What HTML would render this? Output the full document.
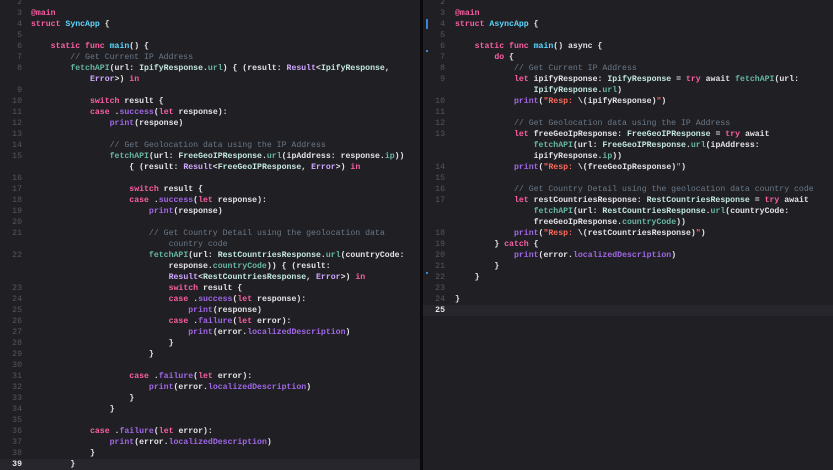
<!DOCTYPE html>
<html><head><meta charset="utf-8"><style>
html,body{margin:0;padding:0;width:833px;height:470px;overflow:hidden;background:#1f1f24}
.pane{position:absolute;top:0;height:470px;background:#1f1f24;overflow:hidden}
.row{position:absolute;left:0;right:0;height:11px;line-height:11px;font-family:"Liberation Mono",monospace;font-size:8.2px;color:#e4e4e6;white-space:pre;font-weight:bold}
.n{position:absolute;text-align:right;width:20px;color:#55555c;font-weight:normal}
.tx{position:absolute}
.hl{background:#26262c}
.hl .n{color:#e6e6e6;font-weight:bold}
.k{color:#fc5fa3;font-weight:bold}
.c{color:#6c7986;font-weight:normal}
.t{color:#c4e8df}
.f{color:#67b7a4}
.p{color:#a167e6}
.r{color:#d0a8ff}
.s{color:#fc6a5d}
.y{color:#5dd8ff}
</style></head><body>
<div class="pane" style="left:0;width:420px">
<div class="row" style="top:-3px"><span class="n" style="left:2px">2</span></div>
<div class="row" style="top:8px"><span class="n" style="left:2px">3</span><span class="tx" style="left:31px"><span class="k">@main</span></span></div>
<div class="row" style="top:19px"><span class="n" style="left:2px">4</span><span class="tx" style="left:31px"><span class="k">struct</span> <span class="y">SyncApp</span> {</span></div>
<div class="row" style="top:30px"><span class="n" style="left:2px">5</span></div>
<div class="row" style="top:41px"><span class="n" style="left:2px">6</span><span class="tx" style="left:31px">    <span class="k">static func</span> <span class="y">main</span>() {</span></div>
<div class="row" style="top:52px"><span class="n" style="left:2px">7</span><span class="tx" style="left:31px"><span class="c">        // Get Current IP Address</span></span></div>
<div class="row" style="top:63px"><span class="n" style="left:2px">8</span><span class="tx" style="left:31px">        <span class="f">fetchAPI</span>(url: <span class="t">IpifyResponse</span>.<span class="f">url</span>) { (result: <span class="r">Result</span>&lt;<span class="t">IpifyResponse</span>,</span></div>
<div class="row" style="top:74px"><span class="tx" style="left:31px">            <span class="r">Error</span>&gt;) <span class="k">in</span></span></div>
<div class="row" style="top:85px"><span class="n" style="left:2px">9</span></div>
<div class="row" style="top:96px"><span class="n" style="left:2px">10</span><span class="tx" style="left:31px">            <span class="k">switch</span> result {</span></div>
<div class="row" style="top:107px"><span class="n" style="left:2px">11</span><span class="tx" style="left:31px">            <span class="k">case</span> .<span class="p">success</span>(<span class="k">let</span> response):</span></div>
<div class="row" style="top:118px"><span class="n" style="left:2px">12</span><span class="tx" style="left:31px">                <span class="p">print</span>(response)</span></div>
<div class="row" style="top:129px"><span class="n" style="left:2px">13</span></div>
<div class="row" style="top:140px"><span class="n" style="left:2px">14</span><span class="tx" style="left:31px"><span class="c">                // Get Geolocation data using the IP Address</span></span></div>
<div class="row" style="top:151px"><span class="n" style="left:2px">15</span><span class="tx" style="left:31px">                <span class="f">fetchAPI</span>(url: <span class="t">FreeGeoIPResponse</span>.<span class="f">url</span>(ipAddress: response.<span class="f">ip</span>))</span></div>
<div class="row" style="top:162px"><span class="tx" style="left:31px">                    { (result: <span class="r">Result</span>&lt;<span class="t">FreeGeoIPResponse</span>, <span class="r">Error</span>&gt;) <span class="k">in</span></span></div>
<div class="row" style="top:173px"><span class="n" style="left:2px">16</span></div>
<div class="row" style="top:184px"><span class="n" style="left:2px">17</span><span class="tx" style="left:31px">                    <span class="k">switch</span> result {</span></div>
<div class="row" style="top:195px"><span class="n" style="left:2px">18</span><span class="tx" style="left:31px">                    <span class="k">case</span> .<span class="p">success</span>(<span class="k">let</span> response):</span></div>
<div class="row" style="top:206px"><span class="n" style="left:2px">19</span><span class="tx" style="left:31px">                        <span class="p">print</span>(response)</span></div>
<div class="row" style="top:217px"><span class="n" style="left:2px">20</span></div>
<div class="row" style="top:228px"><span class="n" style="left:2px">21</span><span class="tx" style="left:31px"><span class="c">                        // Get Country Detail using the geolocation data</span></span></div>
<div class="row" style="top:239px"><span class="tx" style="left:31px"><span class="c">                            country code</span></span></div>
<div class="row" style="top:250px"><span class="n" style="left:2px">22</span><span class="tx" style="left:31px">                        <span class="f">fetchAPI</span>(url: <span class="t">RestCountriesResponse</span>.<span class="f">url</span>(countryCode:</span></div>
<div class="row" style="top:261px"><span class="tx" style="left:31px">                            response.<span class="f">countryCode</span>)) { (result:</span></div>
<div class="row" style="top:272px"><span class="tx" style="left:31px">                            <span class="r">Result</span>&lt;<span class="t">RestCountriesResponse</span>, <span class="r">Error</span>&gt;) <span class="k">in</span></span></div>
<div class="row" style="top:283px"><span class="n" style="left:2px">23</span><span class="tx" style="left:31px">                            <span class="k">switch</span> result {</span></div>
<div class="row" style="top:294px"><span class="n" style="left:2px">24</span><span class="tx" style="left:31px">                            <span class="k">case</span> .<span class="p">success</span>(<span class="k">let</span> response):</span></div>
<div class="row" style="top:305px"><span class="n" style="left:2px">25</span><span class="tx" style="left:31px">                                <span class="p">print</span>(response)</span></div>
<div class="row" style="top:316px"><span class="n" style="left:2px">26</span><span class="tx" style="left:31px">                            <span class="k">case</span> .<span class="p">failure</span>(<span class="k">let</span> error):</span></div>
<div class="row" style="top:327px"><span class="n" style="left:2px">27</span><span class="tx" style="left:31px">                                <span class="p">print</span>(error.<span class="p">localizedDescription</span>)</span></div>
<div class="row" style="top:338px"><span class="n" style="left:2px">28</span><span class="tx" style="left:31px">                            }</span></div>
<div class="row" style="top:349px"><span class="n" style="left:2px">29</span><span class="tx" style="left:31px">                        }</span></div>
<div class="row" style="top:360px"><span class="n" style="left:2px">30</span></div>
<div class="row" style="top:371px"><span class="n" style="left:2px">31</span><span class="tx" style="left:31px">                    <span class="k">case</span> .<span class="p">failure</span>(<span class="k">let</span> error):</span></div>
<div class="row" style="top:382px"><span class="n" style="left:2px">32</span><span class="tx" style="left:31px">                        <span class="p">print</span>(error.<span class="p">localizedDescription</span>)</span></div>
<div class="row" style="top:393px"><span class="n" style="left:2px">33</span><span class="tx" style="left:31px">                    }</span></div>
<div class="row" style="top:404px"><span class="n" style="left:2px">34</span><span class="tx" style="left:31px">                }</span></div>
<div class="row" style="top:415px"><span class="n" style="left:2px">35</span></div>
<div class="row" style="top:426px"><span class="n" style="left:2px">36</span><span class="tx" style="left:31px">            <span class="k">case</span> .<span class="p">failure</span>(<span class="k">let</span> error):</span></div>
<div class="row" style="top:437px"><span class="n" style="left:2px">37</span><span class="tx" style="left:31px">                <span class="p">print</span>(error.<span class="p">localizedDescription</span>)</span></div>
<div class="row" style="top:448px"><span class="n" style="left:2px">38</span><span class="tx" style="left:31px">            }</span></div>
<div class="row hl" style="top:459px"><span class="n" style="left:2px">39</span><span class="tx" style="left:31px">        }</span></div>
</div>
<div style="position:absolute;left:420px;top:0;width:3px;height:470px;background:#0a0a0c"></div>
<div class="pane" style="left:423px;width:410px">
<div style="position:absolute;left:3px;top:19px;width:2px;height:10px;background:#3b82d6"></div>
<div style="position:absolute;left:3px;top:50px;width:2px;height:2px;background:#3b82d6"></div>
<div style="position:absolute;left:3px;top:272px;width:2px;height:2px;background:#3b82d6"></div>
<div class="row" style="top:-3px"><span class="n" style="left:2px">2</span></div>
<div class="row" style="top:8px"><span class="n" style="left:2px">3</span><span class="tx" style="left:32px"><span class="k">@main</span></span></div>
<div class="row" style="top:19px"><span class="n" style="left:2px">4</span><span class="tx" style="left:32px"><span class="k">struct</span> <span class="y">AsyncApp</span> {</span></div>
<div class="row" style="top:30px"><span class="n" style="left:2px">5</span></div>
<div class="row" style="top:41px"><span class="n" style="left:2px">6</span><span class="tx" style="left:32px">    <span class="k">static func</span> <span class="y">main</span>() async {</span></div>
<div class="row" style="top:52px"><span class="n" style="left:2px">7</span><span class="tx" style="left:32px">        <span class="k">do</span> {</span></div>
<div class="row" style="top:63px"><span class="n" style="left:2px">8</span><span class="tx" style="left:32px"><span class="c">            // Get Current IP Address</span></span></div>
<div class="row" style="top:74px"><span class="n" style="left:2px">9</span><span class="tx" style="left:32px">            <span class="k">let</span> ipifyResponse: <span class="t">IpifyResponse</span> = <span class="k">try</span> await <span class="f">fetchAPI</span>(url:</span></div>
<div class="row" style="top:85px"><span class="tx" style="left:32px">                <span class="t">IpifyResponse</span>.<span class="f">url</span>)</span></div>
<div class="row" style="top:96px"><span class="n" style="left:2px">10</span><span class="tx" style="left:32px">            <span class="p">print</span>(<span class="s">"Resp: </span>\(ipifyResponse)<span class="s">"</span>)</span></div>
<div class="row" style="top:107px"><span class="n" style="left:2px">11</span></div>
<div class="row" style="top:118px"><span class="n" style="left:2px">12</span><span class="tx" style="left:32px"><span class="c">            // Get Geolocation data using the IP Address</span></span></div>
<div class="row" style="top:129px"><span class="n" style="left:2px">13</span><span class="tx" style="left:32px">            <span class="k">let</span> freeGeoIpResponse: <span class="t">FreeGeoIPResponse</span> = <span class="k">try</span> await</span></div>
<div class="row" style="top:140px"><span class="tx" style="left:32px">                <span class="f">fetchAPI</span>(url: <span class="t">FreeGeoIPResponse</span>.<span class="f">url</span>(ipAddress:</span></div>
<div class="row" style="top:151px"><span class="tx" style="left:32px">                ipifyResponse.<span class="f">ip</span>))</span></div>
<div class="row" style="top:162px"><span class="n" style="left:2px">14</span><span class="tx" style="left:32px">            <span class="p">print</span>(<span class="s">"Resp: </span>\(freeGeoIpResponse)<span class="s">"</span>)</span></div>
<div class="row" style="top:173px"><span class="n" style="left:2px">15</span></div>
<div class="row" style="top:184px"><span class="n" style="left:2px">16</span><span class="tx" style="left:32px"><span class="c">            // Get Country Detail using the geolocation data country code</span></span></div>
<div class="row" style="top:195px"><span class="n" style="left:2px">17</span><span class="tx" style="left:32px">            <span class="k">let</span> restCountriesResponse: <span class="t">RestCountriesResponse</span> = <span class="k">try</span> await</span></div>
<div class="row" style="top:206px"><span class="tx" style="left:32px">                <span class="f">fetchAPI</span>(url: <span class="t">RestCountriesResponse</span>.<span class="f">url</span>(countryCode:</span></div>
<div class="row" style="top:217px"><span class="tx" style="left:32px">                freeGeoIpResponse.<span class="f">countryCode</span>))</span></div>
<div class="row" style="top:228px"><span class="n" style="left:2px">18</span><span class="tx" style="left:32px">            <span class="p">print</span>(<span class="s">"Resp: </span>\(restCountriesResponse)<span class="s">"</span>)</span></div>
<div class="row" style="top:239px"><span class="n" style="left:2px">19</span><span class="tx" style="left:32px">        } <span class="k">catch</span> {</span></div>
<div class="row" style="top:250px"><span class="n" style="left:2px">20</span><span class="tx" style="left:32px">            <span class="p">print</span>(error.<span class="p">localizedDescription</span>)</span></div>
<div class="row" style="top:261px"><span class="n" style="left:2px">21</span><span class="tx" style="left:32px">        }</span></div>
<div class="row" style="top:272px"><span class="n" style="left:2px">22</span><span class="tx" style="left:32px">    }</span></div>
<div class="row" style="top:283px"><span class="n" style="left:2px">23</span></div>
<div class="row" style="top:294px"><span class="n" style="left:2px">24</span><span class="tx" style="left:32px">}</span></div>
<div class="row hl" style="top:305px"><span class="n" style="left:2px">25</span></div>
</div>
</body></html>
